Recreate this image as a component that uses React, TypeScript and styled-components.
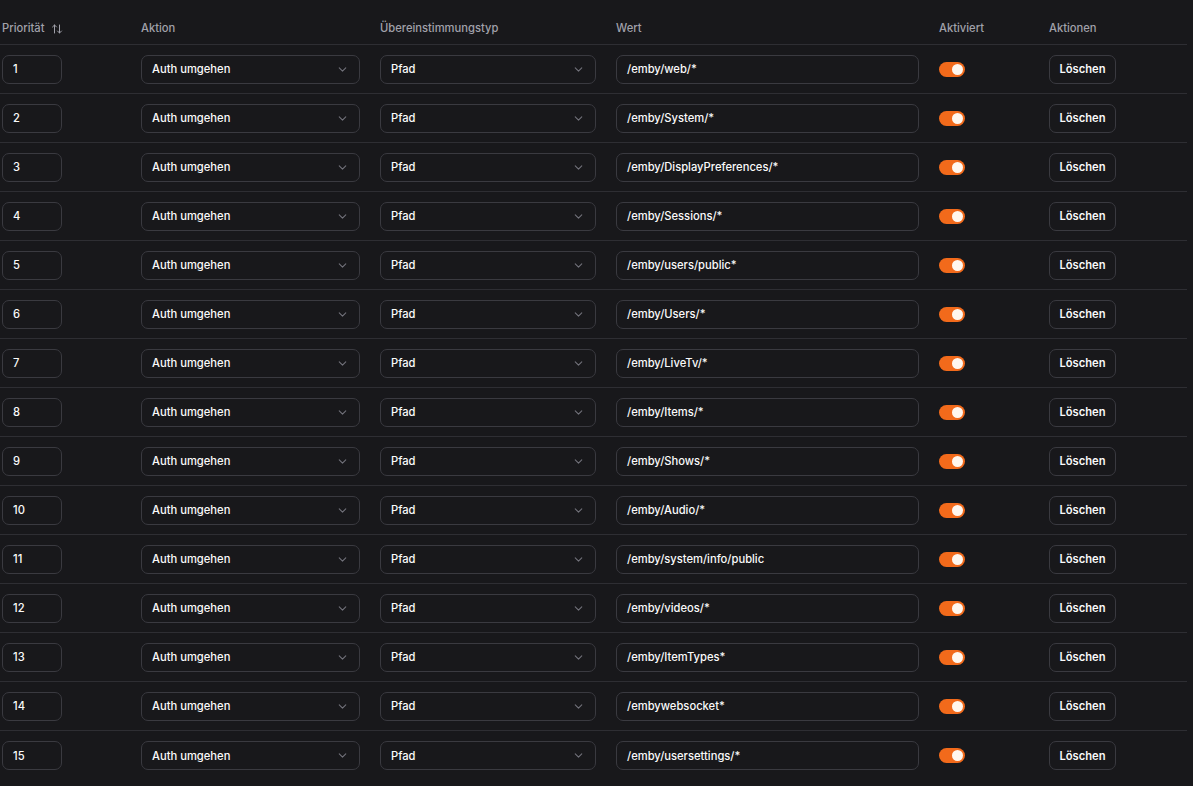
import styled, { createGlobalStyle } from "styled-components";
import { ArrowUpDown, ChevronDown } from "lucide-react";

const GlobalStyle = createGlobalStyle`
    html, body {
        margin: 0;
        padding: 0;
        background: #18181b;
        color: #fafafa;
        font-family: Inter, "Noto Sans", sans-serif;
        font-size: 11.2px;
    }
`;

const Table = styled.div`
    width: 1187px;
    display: grid;
    grid-template-columns: 2px 139px 239px 236px 323px 110px 138px;
`;

const HeaderRow = styled.div`
    display: contents;
`;

const HeadCell = styled.div`
    height: 45px;
    box-sizing: border-box;
    border-bottom: 1px solid #2e2e33;
    display: flex;
    align-items: flex-end;
    gap: 6px;
    padding-bottom: 9px;
    color: #a1a1aa;
    font-weight: 500;
    font-size: 11.2px;
`;

const Row = styled.div`
    display: contents;
`;

const Cell = styled.div<{ $last?: boolean }>`
    height: 49px;
    box-sizing: border-box;
    border-bottom: ${(p) => (p.$last ? "none" : "1px solid #2e2e33")};
    display: flex;
    align-items: center;
    padding-right: 20px;
`;

const Field = styled.div<{ $w: number }>`
    width: ${(p) => p.$w}px;
    height: 29px;
    box-sizing: border-box;
    border: 1px solid #3a3a40;
    border-radius: 7px;
    display: flex;
    align-items: center;
    justify-content: space-between;
    padding: 0 10px 0 10px;
    font-weight: 500;
    color: #fafafa;
    background: #18181b;
`;

const Chevron = styled(ChevronDown)`
    color: #71717a;
`;

const Switch = styled.div`
    width: 26px;
    height: 15px;
    border-radius: 8px;
    background: #f26a1b;
    display: flex;
    align-items: center;
    justify-content: flex-end;
    padding: 0 2px;
    box-sizing: border-box;
`;

const Knob = styled.span`
    width: 11px;
    height: 11px;
    border-radius: 50%;
    background: #fff7ef;
`;

const DeleteButton = styled.button`
    height: 29px;
    width: 67px;
    box-sizing: border-box;
    border: 1px solid #3a3a40;
    border-radius: 7px;
    background: #18181b;
    color: #fafafa;
    font-family: inherit;
    font-size: 11.2px;
    font-weight: 600;
    padding: 0;
`;

const paths = [
    "/emby/web/*",
    "/emby/System/*",
    "/emby/DisplayPreferences/*",
    "/emby/Sessions/*",
    "/emby/users/public*",
    "/emby/Users/*",
    "/emby/LiveTv/*",
    "/emby/Items/*",
    "/emby/Shows/*",
    "/emby/Audio/*",
    "/emby/system/info/public",
    "/emby/videos/*",
    "/emby/ItemTypes*",
    "/embywebsocket*",
    "/emby/usersettings/*",
];

export default function App() {
    return (
        <>
            <GlobalStyle />
            <Table>
                <HeaderRow>
                    <HeadCell />
                    <HeadCell>
                        Priorität <ArrowUpDown size={12} color="#a1a1aa" />
                    </HeadCell>
                    <HeadCell>Aktion</HeadCell>
                    <HeadCell>Übereinstimmungstyp</HeadCell>
                    <HeadCell>Wert</HeadCell>
                    <HeadCell>Aktiviert</HeadCell>
                    <HeadCell>Aktionen</HeadCell>
                </HeaderRow>
                {paths.map((path, i) => {
                    const last = i === paths.length - 1;
                    return (
                        <Row key={path}>
                            <Cell $last={last} style={{ paddingRight: 0 }} />
                            <Cell $last={last}>
                                <Field $w={60}>{i + 1}</Field>
                            </Cell>
                            <Cell $last={last}>
                                <Field $w={219}>
                                    Auth umgehen <Chevron size={13} />
                                </Field>
                            </Cell>
                            <Cell $last={last}>
                                <Field $w={217}>
                                    Pfad <Chevron size={13} />
                                </Field>
                            </Cell>
                            <Cell $last={last}>
                                <Field $w={304}>{path}</Field>
                            </Cell>
                            <Cell $last={last}>
                                <Switch>
                                    <Knob />
                                </Switch>
                            </Cell>
                            <Cell $last={last}>
                                <DeleteButton>Löschen</DeleteButton>
                            </Cell>
                        </Row>
                    );
                })}
            </Table>
        </>
    );
}
